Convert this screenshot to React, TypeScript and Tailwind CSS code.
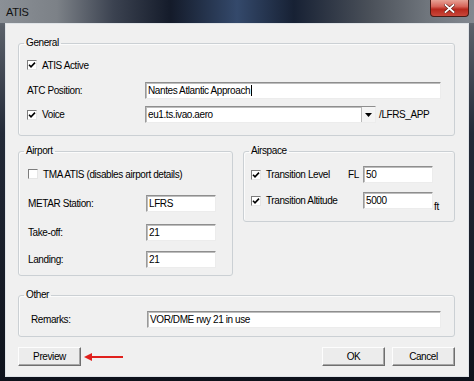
import React from 'react';

// Classic Win7 "ATIS" dialog

function Check({ checked }: { checked?: boolean }) {
  return (
    <span className="w-[10px] h-[10px] shrink-0 bg-white border border-t-[#7c7c7c] border-l-[#7c7c7c] border-r-[#e6e6e6] border-b-[#e6e6e6] flex items-center justify-center">
      {checked && (
        <svg width="8" height="8" viewBox="0 0 8 8">
          <path d="M1 3.8 L3 5.9 L7 1.6" fill="none" stroke="#000" strokeWidth="1.6" />
        </svg>
      )}
    </span>
  );
}

function Field({ width, value, cursor }: { width: string; value: string; cursor?: boolean }) {
  return (
    <div
      className={`h-[17px] ${width} shrink-0 bg-white border border-t-[#8e8e8e] border-l-[#9a9a9a] border-r-[#ececec] border-b-[#ececec] shadow-[inset_1px_1px_0_#bdbdbd] flex items-center pl-[2px] text-black whitespace-nowrap overflow-hidden`}
    >
      {value}
      {cursor && <span className="w-px h-[11px] bg-black ml-px" />}
    </div>
  );
}

function Group({ title, className, children }: { title: string; className: string; children: React.ReactNode }) {
  return (
    <fieldset className={`border border-[#cbd0d4] rounded-[3px] shadow-[inset_1px_1px_0_#fbfbfb] ${className}`}>
      <legend className="ml-[5px] px-[2px] leading-[12px] text-black">{title}</legend>
      {children}
    </fieldset>
  );
}

function Btn({ label }: { label: string }) {
  return (
    <button className="h-[19px] w-[63px] shrink-0 bg-[#ececec] border border-t-[#fdfdfd] border-l-[#fdfdfd] border-r-[#6f6f6f] border-b-[#6f6f6f] shadow-[inset_-1px_-1px_0_#a6a6a6] flex items-center justify-center text-black">
      {label}
    </button>
  );
}

export default function App() {
  return (
    <div className="w-[474px] h-[381px] flex flex-col overflow-hidden bg-[linear-gradient(180deg,#8e9399_0%,#5a6069_7%,#232a38_35%,#0e121b_100%)] [font-family:'Liberation_Sans',Arial,sans-serif] text-[10px] tracking-[-0.4px]">
      {/* title bar */}
      <div className="relative h-[23px] shrink-0 bg-[linear-gradient(90deg,#8b9096_0%,#7c8187_12%,#3b4250_24%,#141b2a_36%,#34496b_50%,#172134_62%,#4a5059_78%,#6f757c_90%,#838890_100%)]">
        <div className="pl-[6px] pt-[6px] text-[11px] leading-[12px] tracking-[-0.3px] text-[#101010]">ATIS</div>
        <div className="absolute right-[5px] top-0 w-[39px] h-[17px] rounded-b-[4px] border border-t-0 border-[#4a1a14] bg-[linear-gradient(180deg,#e7a295_0%,#d7665a_40%,#b7281c_58%,#c9473a_100%)] flex items-center justify-center">
          <svg width="11" height="9" viewBox="0 0 11 9">
            <path d="M1.5 1 L9.5 8 M9.5 1 L1.5 8" stroke="#5a1a12" strokeWidth="3" strokeLinecap="square" />
            <path d="M1.5 1 L9.5 8 M9.5 1 L1.5 8" stroke="#fff" strokeWidth="1.8" strokeLinecap="square" />
          </svg>
        </div>
      </div>

      {/* client area */}
      <div className="flex-1 flex px-[5px] pb-[4px]">
        <div className="flex-1 flex flex-col bg-[#f0f0f0] border border-[#dfe3e7] pt-[13px] pl-[12px] pr-[13px] text-black">
          <Group title="General" className="">
            <div className="pl-[8px] pb-[12px] flex flex-col">
              <div className="mt-[9px] h-[14px] flex items-center gap-[5px]">
                <Check checked />
                <span>ATIS Active</span>
              </div>
              <div className="mt-[10px] flex items-center">
                <span className="w-[118px] shrink-0">ATC Position:</span>
                <Field width="w-[296px]" value="Nantes Atlantic Approach" cursor />
              </div>
              <div className="mt-[7px] flex items-center">
                <div className="w-[118px] shrink-0 flex items-center gap-[5px]">
                  <Check checked />
                  <span>Voice</span>
                </div>
                <div className="h-[17px] w-[231px] shrink-0 bg-white border border-t-[#8e8e8e] border-l-[#9a9a9a] border-r-[#ececec] border-b-[#ececec] shadow-[inset_1px_1px_0_#bdbdbd] flex items-center">
                  <span className="flex-1 pl-[2px]">eu1.ts.ivao.aero</span>
                  <span className="w-[14px] h-[15px] bg-[#f4f4f4] border-l border-[#b8b8b8] flex items-center justify-center">
                    <svg width="7" height="4" viewBox="0 0 7 4">
                      <path d="M0 0 H7 L3.5 4 Z" fill="#000" />
                    </svg>
                  </span>
                </div>
                <span className="ml-[3px]">/LFRS_APP</span>
              </div>
            </div>
          </Group>

          <div className="mt-[9px] flex items-start gap-[10px]">
            <Group title="Airport" className="w-[215px] shrink-0">
              <div className="pl-[9px] pb-[7px] flex flex-col">
                <div className="mt-[10px] h-[14px] flex items-center gap-[5px]">
                  <Check />
                  <span>TMA ATIS (disables airport details)</span>
                </div>
                <div className="mt-[14px] flex items-center">
                  <span className="w-[118px] shrink-0">METAR Station:</span>
                  <Field width="w-[70px]" value="LFRS" />
                </div>
                <div className="mt-[12px] flex items-center">
                  <span className="w-[118px] shrink-0">Take-off:</span>
                  <Field width="w-[70px]" value="21" />
                </div>
                <div className="mt-[10px] flex items-center">
                  <span className="w-[118px] shrink-0">Landing:</span>
                  <Field width="w-[70px]" value="21" />
                </div>
              </div>
            </Group>

            <Group title="Airspace" className="flex-1">
              <div className="pl-[7px] pb-[12px] flex flex-col">
                <div className="mt-[9px] flex items-center">
                  <Check checked />
                  <span className="ml-[5px] w-[82px] shrink-0">Transition Level</span>
                  <span className="w-[15px] shrink-0">FL</span>
                  <Field width="w-[70px]" value="50" />
                </div>
                <div className="mt-[9px] flex items-end">
                  <div className="self-center flex items-center">
                    <Check checked />
                    <span className="ml-[5px] w-[97px] shrink-0">Transition Altitude</span>
                  </div>
                  <Field width="w-[70px]" value="5000" />
                  <span className="ml-[1px] leading-[10px] -mb-[3px]">ft</span>
                </div>
              </div>
            </Group>
          </div>

          <Group title="Other" className="mt-[13px]">
            <div className="pl-[12px] pb-[8px] flex flex-col">
              <div className="mt-[10px] flex items-center">
                <span className="w-[116px] shrink-0">Remarks:</span>
                <Field width="w-[294px]" value="VOR/DME rwy 21 in use" />
              </div>
            </div>
          </Group>

          <div className="mt-[10px] flex items-center">
            <Btn label="Preview" />
            <svg className="ml-[3px]" width="40" height="10" viewBox="0 0 40 10">
              <path d="M6 5 H39" stroke="#e0201c" strokeWidth="2" />
              <path d="M0 5 L8 1 L8 9 Z" fill="#e0201c" />
            </svg>
            <div className="flex-1" />
            <Btn label="OK" />
            <div className="w-[7px]" />
            <Btn label="Cancel" />
          </div>
        </div>
      </div>
    </div>
  );
}
